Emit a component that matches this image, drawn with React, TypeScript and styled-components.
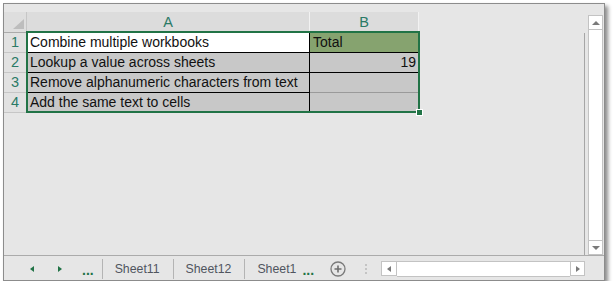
import React from 'react';
import styled, { createGlobalStyle } from 'styled-components';

const GlobalStyle = createGlobalStyle`
  html, body {
    margin: 0;
    padding: 0;
    background: #ffffff;
  }
  body {
    font-family: "Liberation Sans", Arial, sans-serif;
  }
`;

const GREEN = '#217346';
const HEAD_TEXT = '#2a7a66';

const Frame = styled.div`
  box-sizing: border-box;
  margin: 3px 0 0 3px;
  width: 602px;
  height: 278px;
  border: 1px solid #8c8c8c;
  background: #e6e6e6;
  box-shadow: 3px 3px 4px rgba(0, 0, 0, 0.45);
  display: flex;
  flex-direction: column;
`;

const Main = styled.div`
  display: flex;
  height: 251px;
`;

const SheetArea = styled.div`
  flex: 1;
  display: flex;
  flex-direction: column;
  padding-top: 8px;
`;

const HeaderRow = styled.div`
  display: flex;
  height: 21px;
`;

const Corner = styled.div`
  position: relative;
  box-sizing: border-box;
  width: 23px;
  background: #dedede;
  border-right: 1px solid #c6c6c6;
  border-bottom: 1px solid #ababab;

  &::after {
    content: '';
    position: absolute;
    right: 2px;
    bottom: 3px;
    width: 0;
    height: 0;
    border-left: 11px solid transparent;
    border-bottom: 10px solid #bdbdbd;
  }
`;

const ColHead = styled.div<{ w: number }>`
  box-sizing: border-box;
  width: ${p => p.w}px;
  background: #dcdcdc;
  border-right: 1px solid #f2f2f2;
  border-bottom: 1px solid #ababab;
  color: ${HEAD_TEXT};
  font-size: 14.5px;
  line-height: 20px;
  text-align: center;
`;

const RowsArea = styled.div`
  position: relative;
  flex: 1;
  border-right: 1px solid #a6a6a6;
`;

const Row = styled.div`
  display: flex;
  height: 20px;
`;

const RowHead = styled.div`
  box-sizing: border-box;
  width: 23px;
  background: #e1e1e1;
  border-right: 1px solid #ababab;
  border-bottom: 1px solid #c6c6c6;
  color: ${HEAD_TEXT};
  font-size: 14.5px;
  line-height: 19px;
  text-align: center;
`;

const Cell = styled.div<{ w: number; bg: string; right?: boolean; lineColor?: string }>`
  box-sizing: border-box;
  width: ${p => p.w}px;
  background: ${p => p.bg};
  border-right: 1px solid #000000;
  border-bottom: 1px solid ${p => p.lineColor || '#000000'};
  padding: 0 ${p => (p.right ? '2px' : '0')} 0 ${p => (p.right ? '0' : '3px')};
  color: #111111;
  font-size: 14px;
  line-height: 19px;
  white-space: nowrap;
  overflow: hidden;
  text-align: ${p => (p.right ? 'right' : 'left')};
`;

const Selection = styled.div`
  position: absolute;
  left: 22px;
  top: -2px;
  width: 394px;
  height: 82px;
  box-sizing: border-box;
  border: 2px solid ${GREEN};
  pointer-events: none;
`;

const FillHandle = styled.div`
  position: absolute;
  left: 412px;
  top: 76px;
  width: 7px;
  height: 7px;
  box-sizing: border-box;
  background: ${GREEN};
  border: 1px solid #ffffff;
`;

const VScroll = styled.div`
  width: 19px;
  box-sizing: border-box;
  padding: 11px 1px 0 3px;
  display: flex;
  flex-direction: column;
`;

const ScrollButton = styled.div<{ w?: number }>`
  box-sizing: border-box;
  width: ${p => (p.w ? `${p.w}px` : '15px')};
  height: 15px;
  background: #ffffff;
  border: 1px solid #c3c3c3;
  display: flex;
  align-items: center;
  justify-content: center;
  flex-shrink: 0;
`;

const VTrack = styled.div`
  flex: 1;
  box-sizing: border-box;
  width: 15px;
  background: #ffffff;
  border-left: 1px solid #c3c3c3;
  border-right: 1px solid #c3c3c3;
`;

const Arrow = styled.span<{ dir: 'up' | 'down' | 'left' | 'right'; color?: string }>`
  width: 0;
  height: 0;
  ${p => {
    const c = p.color || '#7a7a7a';
    if (p.dir === 'up') return `border-left: 4px solid transparent; border-right: 4px solid transparent; border-bottom: 4px solid ${c};`;
    if (p.dir === 'down') return `border-left: 4px solid transparent; border-right: 4px solid transparent; border-top: 4px solid ${c};`;
    if (p.dir === 'left') return `border-top: 3.5px solid transparent; border-bottom: 3.5px solid transparent; border-right: 4px solid ${c};`;
    return `border-top: 3.5px solid transparent; border-bottom: 3.5px solid transparent; border-left: 4px solid ${c};`;
  }}
`;

const TabBar = styled.div`
  box-sizing: border-box;
  height: 25px;
  border-top: 1px solid #ababab;
  padding: 2px 0 0 26px;
  display: flex;
  align-items: center;
`;

const NavArrow = styled.div<{ gap: number }>`
  margin-left: ${p => p.gap}px;
  display: flex;
  align-items: center;
`;

const Dots = styled.span<{ gap: number }>`
  margin-left: ${p => p.gap}px;
  color: ${GREEN};
  font-size: 14px;
  font-weight: bold;
  line-height: 14px;
  padding-top: 1px;
`;

const Sep = styled.div<{ gap?: number }>`
  margin-left: ${p => p.gap || 0}px;
  width: 1px;
  height: 20px;
  background: #b4b4b4;
`;

const Tab = styled.div<{ tight?: boolean }>`
  padding: 0 ${p => (p.tight ? '0' : '13px')} 0 12px;
  color: #50555f;
  font-size: 12.3px;
  line-height: 20px;
  white-space: nowrap;
`;

const AddButton = styled.div`
  margin-left: 16px;
  width: 16px;
  height: 16px;
  display: flex;
`;

const VDots = styled.div`
  margin-left: 19px;
  display: flex;
  flex-direction: column;
  gap: 2px;

  span {
    width: 2px;
    height: 2px;
    background: #c4c4c4;
  }
`;

const HScroll = styled.div`
  margin-left: 14px;
  display: flex;
  height: 16px;
`;

const HTrack = styled.div`
  box-sizing: border-box;
  width: 173px;
  background: #ffffff;
  border-top: 1px solid #c3c3c3;
  border-bottom: 1px solid #c3c3c3;
`;

const rows = [
  { n: 1, a: 'Combine multiple workbooks', b: 'Total', aBg: '#ffffff', bBg: '#86a36f' },
  { n: 2, a: 'Lookup a value across sheets', b: '19', aBg: '#c8c8c8', bBg: '#c8c8c8', right: true },
  { n: 3, a: 'Remove alphanumeric characters from text', b: '', aBg: '#c8c8c8', bBg: '#c8c8c8', bLine: '#9a9a9a' },
  { n: 4, a: 'Add the same text to cells', b: '', aBg: '#c8c8c8', bBg: '#c8c8c8' },
];

export default function App() {
  return (
    <>
      <GlobalStyle />
      <Frame>
        <Main>
          <SheetArea>
            <HeaderRow>
              <Corner />
              <ColHead w={283}>A</ColHead>
              <ColHead w={109}>B</ColHead>
            </HeaderRow>
            <RowsArea>
              {rows.map(r => (
                <Row key={r.n}>
                  <RowHead>{r.n}</RowHead>
                  <Cell w={283} bg={r.aBg}>{r.a}</Cell>
                  <Cell w={109} bg={r.bBg} right={r.right} lineColor={r.bLine}>{r.b}</Cell>
                </Row>
              ))}
              <Selection />
              <FillHandle />
            </RowsArea>
          </SheetArea>
          <VScroll>
            <ScrollButton><Arrow dir="up" /></ScrollButton>
            <VTrack />
            <ScrollButton><Arrow dir="down" /></ScrollButton>
          </VScroll>
        </Main>
        <TabBar>
          <NavArrow gap={0}><Arrow dir="left" color={GREEN} /></NavArrow>
          <NavArrow gap={24}><Arrow dir="right" color={GREEN} /></NavArrow>
          <Dots gap={20}>...</Dots>
          <Sep gap={8} />
          <Tab>Sheet11</Tab>
          <Sep />
          <Tab>Sheet12</Tab>
          <Sep />
          <Tab tight>Sheet1</Tab>
          <Dots gap={6}>...</Dots>
          <AddButton>
            <svg width="16" height="16" viewBox="0 0 16 16">
              <circle cx="8" cy="8" r="7" fill="none" stroke="#7a7a7a" strokeWidth="1.3" />
              <path d="M8 4.5v7M4.5 8h7" stroke="#6e6e6e" strokeWidth="1.6" />
            </svg>
          </AddButton>
          <VDots><span /><span /><span /></VDots>
          <HScroll>
            <ScrollButton w={16}><Arrow dir="left" /></ScrollButton>
            <HTrack />
            <ScrollButton><Arrow dir="right" /></ScrollButton>
          </HScroll>
        </TabBar>
      </Frame>
    </>
  );
}
